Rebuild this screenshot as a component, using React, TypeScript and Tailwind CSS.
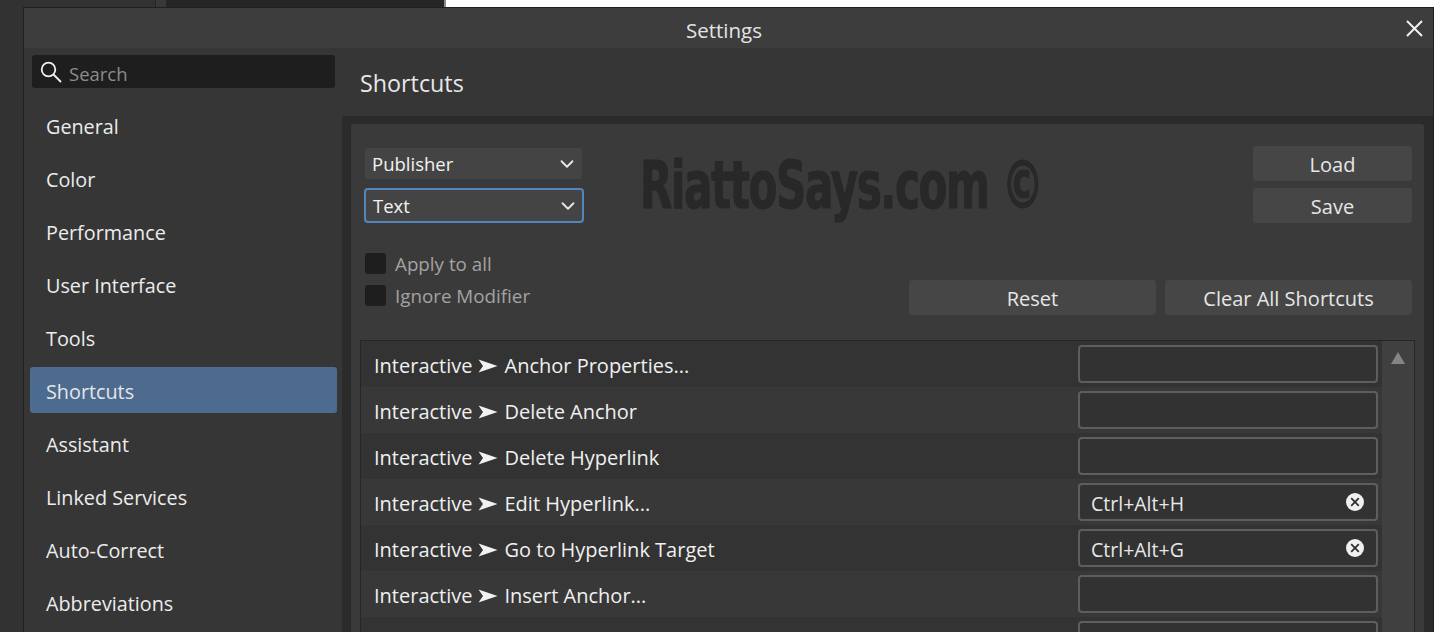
import React from 'react';
import { ChevronDown } from 'lucide-react';

const menu = ['General', 'Color', 'Performance', 'User Interface', 'Tools', 'Shortcuts', 'Assistant', 'Linked Services', 'Auto-Correct', 'Abbreviations'];

const rows = [
  { name: 'Anchor Properties...', keys: '' },
  { name: 'Delete Anchor', keys: '' },
  { name: 'Delete Hyperlink', keys: '' },
  { name: 'Edit Hyperlink...', keys: 'Ctrl+Alt+H' },
  { name: 'Go to Hyperlink Target', keys: 'Ctrl+Alt+G' },
  { name: 'Insert Anchor...', keys: '' },
  { name: '', keys: '' },
];

const Arrow = () => (
  <svg width="20" height="14" viewBox="0 0 20 14" className="mx-[6px] shrink-0">
    <path d="M0.5 0.5 L19.5 7 L0.5 13.5 L5 7 Z" fill="#f2f2f2" />
  </svg>
);

const ClearIcon = () => (
  <svg width="18" height="18" viewBox="0 0 18 18" className="shrink-0">
    <circle cx="9" cy="9" r="9" fill="#f0f0f0" />
    <path d="M5.2 5.2 L12.8 12.8 M12.8 5.2 L5.2 12.8" stroke="#2c2c2c" strokeWidth="1.7" />
  </svg>
);

const Button = ({ label, className }: { label: string; className: string }) => (
  <button className={`flex items-center justify-center rounded-[3px] bg-[#464646] pt-[2px] text-[#e6e6e6] text-[20px] ${className}`}>
    {label}
  </button>
);

const App: React.FC = () => {
  return (
    <div className="flex flex-col w-screen h-screen overflow-hidden bg-white font-['Open_Sans',sans-serif] text-[20px]">
      {/* strip of the app behind the dialog */}
      <div className="flex h-[7px] shrink-0">
        <div className="w-[156px] bg-[#323232] border-r border-[#262626]" />
        <div className="w-[10px] bg-[#383838]" />
        <div className="w-[278px] bg-[#262626]" />
        <div className="w-[2px] bg-[#8a8a8a]" />
      </div>

      <div className="flex flex-1 min-h-0">
        <div className="w-[23px] bg-[#323232] shrink-0" />

        {/* dialog */}
        <div className="w-[1411px] shrink-0 flex flex-col border border-[#1f1f1f] border-b-0 bg-[#363636]">
          <div className="relative h-[40px] shrink-0 flex items-center justify-center bg-[#3d3d3d] text-[#e4e4e4] text-[20.5px] pt-[4px] pr-[9px]">
            Settings
            <svg width="17" height="17" viewBox="0 0 17 17" className="absolute right-[10px] top-[12px]">
              <path d="M1 1 L16 16 M16 1 L1 16" stroke="#f0f0f0" strokeWidth="2" />
            </svg>
          </div>

          <div className="flex flex-1 min-h-0">
            {/* sidebar */}
            <aside className="w-[318px] shrink-0 flex flex-col pt-[7px] pl-[6px]">
              <div className="ml-[2px] w-[303px] h-[35px] flex items-center rounded-[3px] bg-[#1e1e1e] pl-[8px] text-[#8c8c8c] text-[18.5px]">
                <svg width="22" height="22" viewBox="0 0 22 22" fill="none" stroke="#f0f0f0" strokeWidth="1.8" className="mr-[7px]">
                  <circle cx="8.5" cy="8.5" r="6.8" />
                  <path d="M13.5 13.5 L21 21" />
                </svg>
                <span className="pt-[4px]">Search</span>
              </div>
              <nav className="flex flex-col mt-[14px] text-[19.8px]">
                {menu.map((item) => (
                  <div
                    key={item}
                    className={`w-[307px] h-[46px] mb-[7px] shrink-0 flex items-center pl-[16px] pt-[4px] rounded-[3px] ${item === 'Shortcuts' ? 'bg-[#4d6b8f] text-[#e6e6e6]' : 'text-[#ececec]'}`}
                  >
                    {item}
                  </div>
                ))}
              </nav>
            </aside>

            {/* right side */}
            <main className="flex-1 min-w-0 flex flex-col">
              <div className="h-[68px] shrink-0 flex items-center pl-[18px] text-[23.3px] text-[#e8e8e8] pt-[2px]">
                Shortcuts
              </div>

              <div className="flex-1 min-h-0 bg-[#2b2b2b] pt-[8px] pl-[9px] pr-[9px]">
                <div className="h-full rounded-t-[3px] bg-[#3a3a3a] pl-[9px] pr-[9px]">
                  <div className="flex justify-between pt-[22px] pl-[4px] pr-[3px]">
                    <div className="flex flex-col w-[220px] shrink-0 text-[18.5px]">
                      <div className="mt-[2px] ml-[1px] w-[217px] h-[31px] flex items-center justify-between rounded-[3px] bg-[#444444] pl-[7px] pr-[4px] text-[#f2f2f2]">
                        Publisher
                        <ChevronDown size={22} strokeWidth={2} className="text-[#e8e8e8]" />
                      </div>
                      <div className="mt-[9px] w-[220px] h-[35px] flex items-center justify-between rounded-[4px] border-2 border-[#5485bd] bg-[#444444] pl-[7px] pr-[3px] pt-[1px] text-[#f2f2f2]">
                        Text
                        <ChevronDown size={22} strokeWidth={2} className="text-[#e8e8e8]" />
                      </div>
                    </div>

                    {/* watermark */}
                    <div className="ml-[56px] mt-[9px] w-[400px] h-[60px] flex items-center font-['DejaVu_Sans_Condensed','DejaVu_Sans',sans-serif] font-bold text-[66px] text-[#282828] [-webkit-text-stroke:1px_#282828] whitespace-nowrap tracking-[-2px]">
                      <span className="origin-left scale-x-[0.71]">RiattoSays.com ©</span>
                    </div>

                    <div className="ml-auto flex flex-col w-[159px] gap-[7px]">
                      <Button label="Load" className="h-[35px]" />
                      <Button label="Save" className="h-[35px]" />
                    </div>
                  </div>

                  <div className="flex justify-between items-start pl-[5px] pr-[3px] mt-[30px] h-[87px]">
                    <div className="flex flex-col gap-[11px] text-[#a3a3a3] text-[18.8px]">
                      <label className="flex items-center h-[21px]">
                        <span className="w-[21px] h-[21px] rounded-[3px] bg-[#1e1e1e] mr-[9px]" />
                        <span className="pt-[2px]">Apply to all</span>
                      </label>
                      <label className="flex items-center h-[21px]">
                        <span className="w-[21px] h-[21px] rounded-[3px] bg-[#1e1e1e] mr-[9px]" />
                        <span className="pt-[2px]">Ignore Modifier</span>
                      </label>
                    </div>
                    <div className="flex gap-[9px] mt-[27px]">
                      <Button label="Reset" className="w-[247px] h-[35px]" />
                      <Button label="Clear All Shortcuts" className="w-[247px] h-[35px]" />
                    </div>
                  </div>

                  {/* shortcuts table */}
                  <div className="flex w-[1055px] h-[400px] border border-[#262626] border-b-0 bg-[#404040]">
                    <div className="flex-1 min-w-0">
                      {rows.map((row, i) => (
                        <div key={i} className={`h-[46px] flex items-center pl-[13px] pr-[4px] text-[#f0f0f0] ${i % 2 === 0 ? 'bg-[#333333]' : 'bg-[#383838]'}`}>
                          {row.name && (
                            <span className="flex items-center pt-[4px]">
                              Interactive
                              <Arrow />
                              {row.name}
                            </span>
                          )}
                          <div className="ml-auto w-[300px] h-[38px] flex items-center justify-between rounded-[4px] border-2 border-[#5e5e5e] bg-[#323232] pl-[11px] pr-[12px] text-[#e8e8e8] text-[19.5px]">
                            <span className="pt-[3px]">{row.keys}</span>
                            {row.keys && <ClearIcon />}
                          </div>
                        </div>
                      ))}
                    </div>
                    <div className="w-[32px] shrink-0 flex justify-center pt-[11px]">
                      <svg width="14" height="12" viewBox="0 0 14 12">
                        <path d="M7 0 L14 12 L0 12 Z" fill="#858585" />
                      </svg>
                    </div>
                  </div>
                </div>
              </div>
            </main>
          </div>
        </div>
      </div>
    </div>
  );
};

export default App;
